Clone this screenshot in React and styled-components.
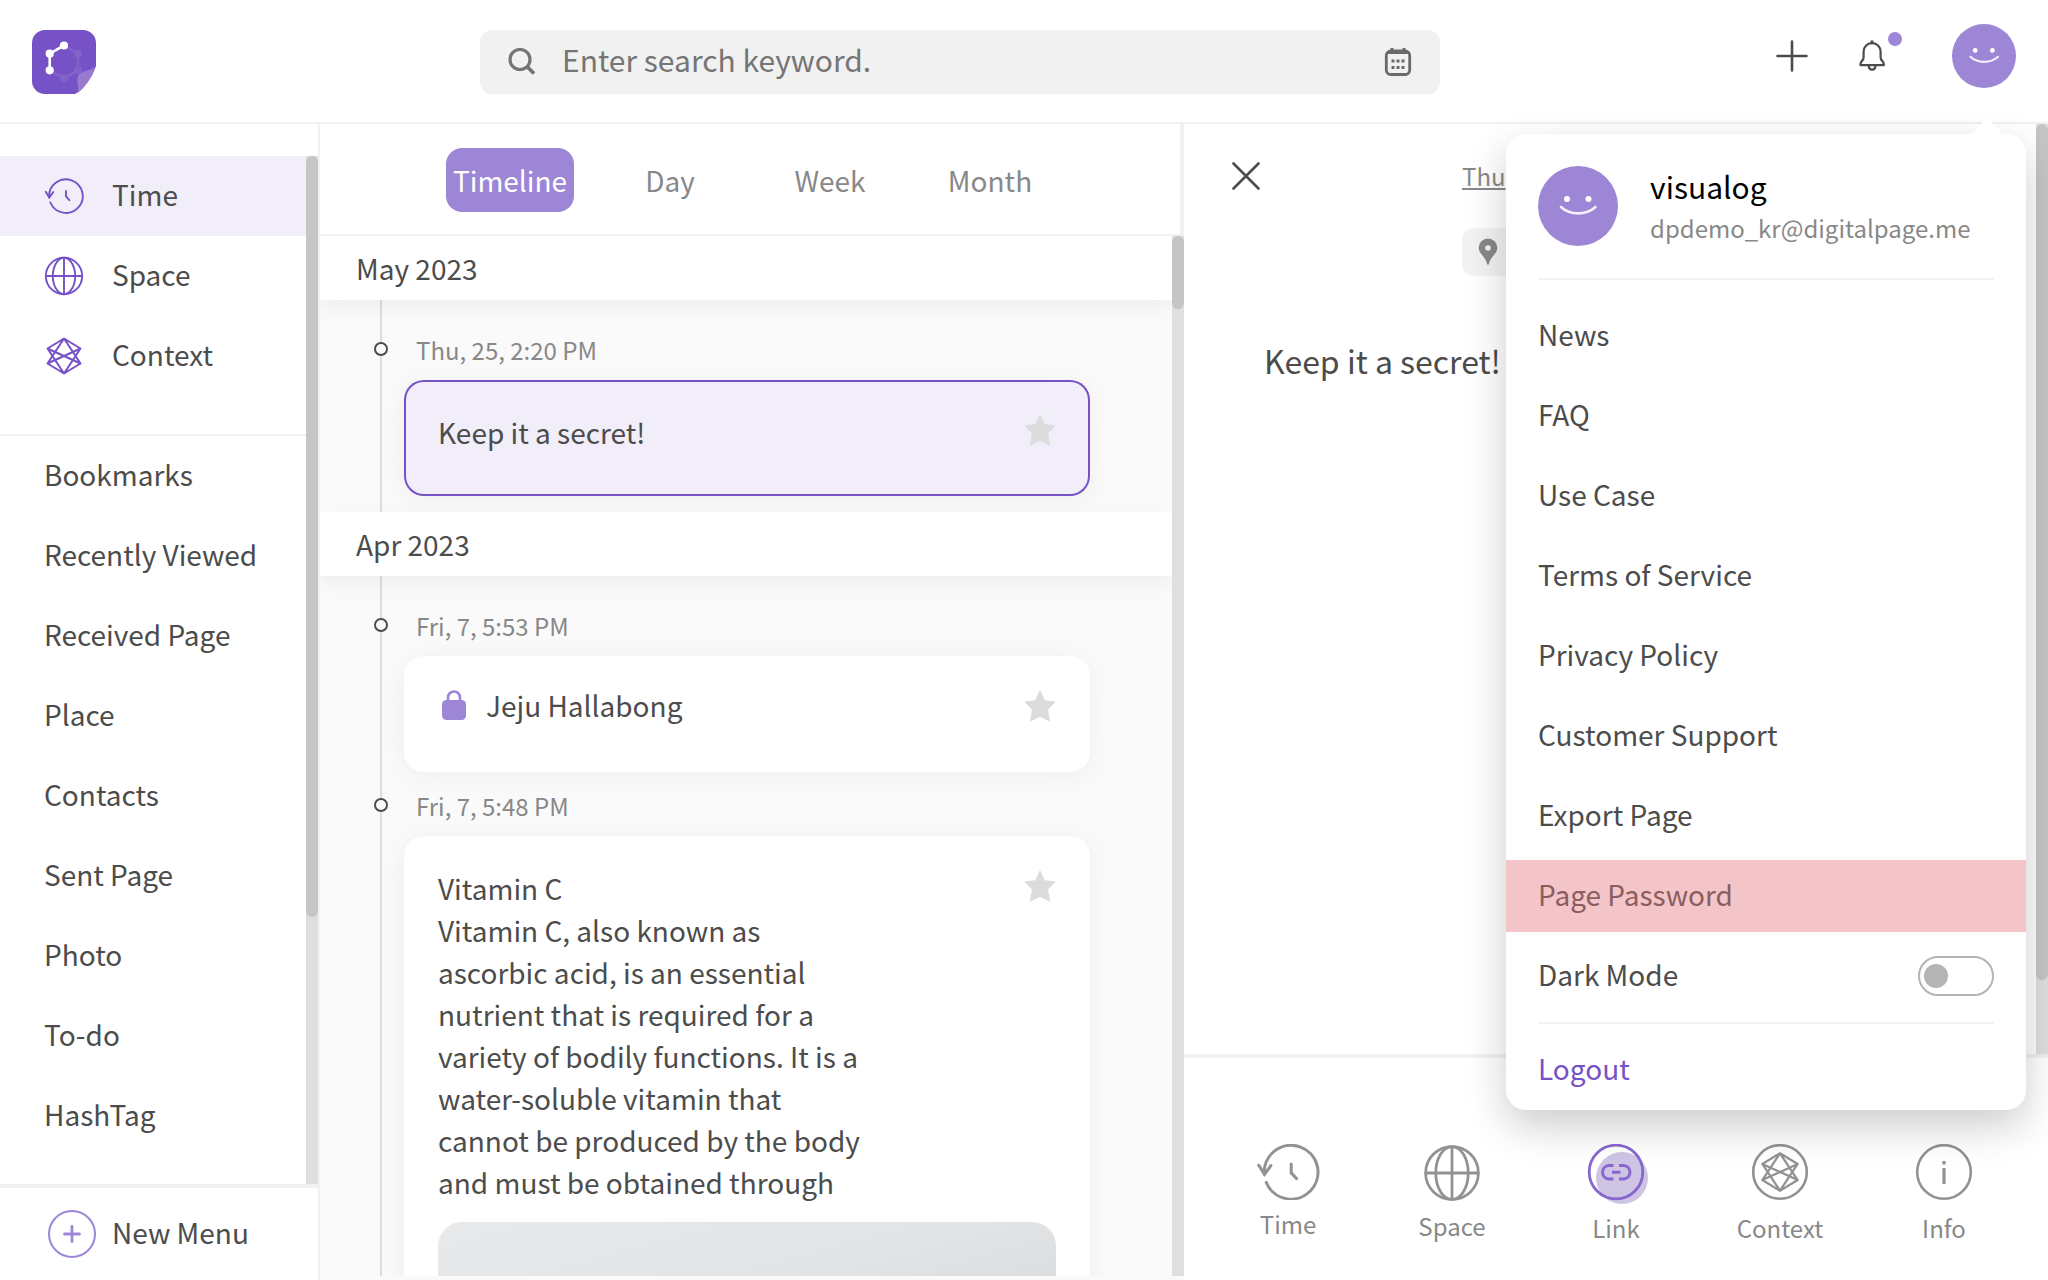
import React from "react";
import { useState } from "react";
import styled, { createGlobalStyle } from "styled-components";

const GlobalStyle = createGlobalStyle`
  *, *::before {
    box-sizing: border-box;
  }

  body {
    margin: 0;
    background: #ffffff;
    color: #4c4c4c;
    font-family: "Noto Sans CJK KR", "Noto Sans", sans-serif;
    font-size: 28px;
    font-weight: 400;
    line-height: 42px;
  }

  button, input {
    padding: 0;
    border: none;
    background: none;
    color: inherit;
    font: inherit;
  }

  button {
    cursor: pointer;
  }

  a {
    color: inherit;
    text-decoration: none;
  }

  svg {
    display: block;
    flex-shrink: 0;
  }
`;

const Page = styled.div`
  position: relative;
  display: flex;
  flex-direction: column;
  height: 100vh;
  overflow: hidden;
`;

/* header */

const Header = styled.header`
  display: grid;
  grid-template-columns: 448px minmax(0, 960px) 1fr;
  align-items: start;
  height: 124px;
  flex-shrink: 0;
  padding: 24px 32px 0;
  border-bottom: 2px solid #f1f1f1;
`;

const LogoLink = styled.a`
  width: 64px;
  margin-top: 6px;
`;

const SearchBar = styled.form`
  display: flex;
  align-items: center;
  gap: 26px;
  height: 64px;
  margin-top: 6px;
  padding: 0 28px;
  border-radius: 12px;
  background: #f1f1f1;
`;

const SearchInput = styled.input`
  flex: 1;
  min-width: 0;
  height: 48px;
  padding-bottom: 6px;
  font-size: 30px;
  outline: none;

  &::placeholder {
    color: #757575;
    opacity: 1;
  }
`;

const HeaderActions = styled.div`
  display: flex;
  justify-content: flex-end;
  align-items: center;
  height: 64px;
`;

const IconButton = styled.button`
  position: relative;
  display: flex;
  justify-content: center;
  align-items: center;
  width: ${(props) => props.$size || 32}px;
  height: ${(props) => props.$size || 32}px;
  margin-right: ${(props) => props.$gap || 0}px;
`;

const AlertDot = styled.span`
  position: absolute;
  top: -8px;
  right: -14px;
  width: 14px;
  height: 14px;
  border-radius: 50%;
  background: #9d86d6;
`;

const Body = styled.div`
  display: flex;
  flex: 1;
  min-height: 0;
`;

/* scroll area */

const ScrollArea = styled.div`
  display: flex;
  flex: 1;
  min-height: 0;
`;

const ScrollContent = styled.div`
  flex: 1;
  min-width: 0;
  overflow: hidden;
  background: ${(props) => props.$background || "#ffffff"};
`;

const ScrollTrack = styled.div`
  width: 12px;
  flex-shrink: 0;
  background: #dfdfdf;
`;

const ScrollThumb = styled.div`
  height: ${(props) => props.$ratio}%;
  border-radius: 6px;
  background: #c5c5c5;
`;

/* sidebar */

const Sidebar = styled.nav`
  display: flex;
  flex-direction: column;
  width: 320px;
  flex-shrink: 0;
  padding-top: 32px;
  border-right: 2px solid #f1f1f1;
`;

const MenuList = styled.ul`
  margin: 0;
  padding: 0 0 ${(props) => (props.$divided ? 38 : 0)}px;
  border-bottom: ${(props) => (props.$divided ? "2px solid #f1f1f1" : "none")};
  list-style: none;
`;

const MenuLink = styled.a`
  display: flex;
  align-items: center;
  gap: 28px;
  height: 80px;
  padding-left: 44px;
  background: ${(props) => (props.$active ? "#f1eef9" : "transparent")};
`;

const MenuLabel = styled.span`
  padding-bottom: 4px;
`;

const NewMenuButton = styled.button`
  display: flex;
  align-items: center;
  gap: 16px;
  height: 96px;
  flex-shrink: 0;
  padding-left: 48px;
  border-top: 4px solid #f1f1f1;
`;

/* timeline */

const TimelineColumn = styled.section`
  display: flex;
  flex-direction: column;
  width: 864px;
  flex-shrink: 0;
  padding-bottom: 4px;
  background: #fafafa;
`;

const Tabs = styled.div`
  display: flex;
  justify-content: center;
  gap: 32px;
  height: 112px;
  flex-shrink: 0;
  padding-top: 24px;
  border-right: 4px solid #f1f1f1;
  border-bottom: 2px solid #f1f1f1;
  background: #ffffff;
`;

const Tab = styled.button`
  width: 128px;
  height: 64px;
  border-radius: 16px;
  background: ${(props) => (props.$active ? "#9d86d6" : "transparent")};
  color: ${(props) => (props.$active ? "#ffffff" : "#888888")};
`;

const MonthTitle = styled.h2`
  position: relative;
  height: 64px;
  margin: 0;
  padding: 11px 36px;
  background: #ffffff;
  box-shadow: 0 8px 20px rgba(0, 0, 0, 0.05);
  font-size: 28px;
  font-weight: 400;
`;

const MonthEntries = styled.div`
  margin-left: 60px;
  padding: 16px 82px 16px 24px;
  border-left: 2px solid #dcdcdc;
`;

const EntryTime = styled.div`
  position: relative;
  height: 64px;
  padding: 13px 10px 0;
  color: #888888;
  font-size: 24px;

  &::before {
    content: "";
    position: absolute;
    top: 26px;
    left: -32px;
    width: 14px;
    height: 14px;
    border: 2px solid #4c4c4c;
    border-radius: 50%;
    background: #fafafa;
  }
`;

const Card = styled.article`
  min-height: 116px;
  margin-left: -2px;
  padding: 31px 34px;
  border-radius: 20px;
  background: ${(props) => (props.$selected ? "#f1eef9" : "#ffffff")};
  box-shadow: ${(props) => (props.$selected ? "inset 0 0 0 2px #7652c6, " : "")}0 4px 30px rgba(0, 0, 0, 0.05);
`;

const CardRow = styled.div`
  display: flex;
  justify-content: space-between;
  align-items: flex-start;
`;

const CardText = styled.p`
  display: flex;
  align-items: center;
  gap: 16px;
  max-width: 430px;
  margin: 0;
  line-height: ${(props) => (props.$locked ? 36 : 42)}px;
  white-space: pre-line;
`;

const StarButton = styled.button`
  display: flex;
  align-items: center;
  width: 32px;
  height: 38px;
`;

const CardPhoto = styled.div`
  height: 300px;
  margin-top: 19px;
  border-radius: 24px;
  background: linear-gradient(165deg, #e8e9eb 0%, #e3e4e6 30%, #d6d8da 60%);
`;

/* page detail */

const Detail = styled.main`
  display: flex;
  flex-direction: column;
  flex: 1;
  min-width: 0;
`;

const DetailTop = styled.div`
  display: grid;
  grid-template-columns: 64px 1fr 64px;
  padding: 32px 42px 0;
`;

const DetailMeta = styled.div`
  display: flex;
  flex-direction: column;
  align-items: stretch;
  gap: 32px;
  width: 296px;
  margin: 0 auto;
`;

const DetailDate = styled.a`
  color: #888888;
  font-size: 24px;
  line-height: 40px;
  text-decoration: underline;
  text-decoration-thickness: 2px;
  text-underline-offset: 2px;
`;

const PlaceChip = styled.button`
  display: flex;
  align-items: center;
  height: 48px;
  padding-left: 16px;
  border-radius: 12px;
  background: #f2f2f2;
`;

const DetailText = styled.p`
  margin: 60px 80px 0;
  font-size: 32px;
  line-height: 48px;
`;

const DetailTools = styled.div`
  display: flex;
  height: 226px;
  flex-shrink: 0;
  padding: 86px 22px 0;
  border-top: 4px solid #f1f1f1;
`;

const ToolButton = styled.button`
  display: flex;
  flex-direction: column;
  align-items: center;
  flex: 1;
  gap: 3px;
  color: #888888;
  font-size: 24px;
`;

/* profile menu */

const ProfileMenu = styled.aside`
  position: absolute;
  top: 134px;
  right: 22px;
  width: 520px;
  padding: 32px 0 4px;
  border-radius: 20px;
  background: #ffffff;
  box-shadow: 0 16px 40px rgba(0, 0, 0, 0.2);

  &::before {
    content: "";
    position: absolute;
    top: -16px;
    right: 23px;
    border-right: 16px solid transparent;
    border-bottom: 16px solid #ffffff;
    border-left: 16px solid transparent;
  }
`;

const Profile = styled.div`
  display: flex;
  gap: 32px;
  height: 112px;
  padding: 0 32px;
`;

const ProfileName = styled.div`
  color: #000000;
  font-size: 30px;
  line-height: 40px;
`;

const ProfileEmail = styled.div`
  color: #888888;
  font-size: 24px;
  line-height: 44px;
`;

const MenuDivider = styled.hr`
  margin: 0 32px ${(props) => props.$space}px;
  border: none;
  border-top: 2px solid #f4f4f4;
`;

const ProfileLinks = styled.ul`
  display: flex;
  flex-direction: column;
  gap: 8px;
  margin: 0;
  padding: 0 0 10px;
  list-style: none;
`;

const ProfileLink = styled.a`
  display: flex;
  align-items: center;
  height: 72px;
  padding: 0 32px;
  background: ${(props) => (props.$highlight ? "#f3c5c8" : "transparent")};
  color: ${(props) => (props.$highlight ? "#8c5d60" : "inherit")};
`;

const DarkModeRow = styled.label`
  display: flex;
  justify-content: space-between;
  align-items: center;
  height: 72px;
  padding: 0 32px;
`;

const Switch = styled.input`
  display: flex;
  align-items: center;
  width: 76px;
  height: 40px;
  margin: 0;
  padding: 0 4px;
  border: 2px solid #b4b4b4;
  border-radius: 20px;
  appearance: none;

  &::before {
    content: "";
    width: 24px;
    height: 24px;
    border-radius: 50%;
    background: #b4b4b4;
  }

  &:checked {
    justify-content: flex-end;
  }
`;

const LogoutButton = styled.button`
  display: block;
  width: 100%;
  height: 72px;
  padding: 0 32px 4px;
  color: #7652c6;
  text-align: left;
`;

/* icons */

const Logo = () => (
  <svg width="64" height="64" viewBox="0 0 64 64">
    <path d="M13 0H51A13 13 0 0 1 64 13V36C60 47 53 58 43 64H13A13 13 0 0 1 0 51V13A13 13 0 0 1 13 0Z" fill="#7652c6" />
    <g stroke="#8163c9" fill="#8163c9" strokeWidth="2.4">
      <path d="M32 15.5L46 23.7V40.3L32 48.5L17.7 40.3" fill="none" />
      <circle cx="46" cy="23.7" r="2.8" />
      <circle cx="46" cy="40.3" r="2.8" />
      <circle cx="32" cy="48.5" r="2.8" />
    </g>
    <path d="M64 36C60 47 53 58 45 63.5C48 58 44.500 53 45.500 48C47 40 58 42 64 36Z" fill="#9a79d0" />
    <g stroke="#ffffff" fill="#ffffff" strokeWidth="2.6">
      <path d="M32 15.500L17.700 23.700V40.300" fill="none" />
      <circle cx="32" cy="15.5" r="2.8" />
      <circle cx="17.7" cy="23.7" r="2.8" />
      <circle cx="17.7" cy="40.3" r="2.8" />
    </g>
  </svg>
);

const Smile = ({ size }) => (
  <svg width={size} height={size} viewBox="0 0 80 80">
    <circle cx="40" cy="40" r="40" fill="#9d86d6" />
    <circle cx="29" cy="33" r="3" fill="#ffffff" />
    <circle cx="50.5" cy="33" r="3" fill="#ffffff" />
    <path d="M23 41C32 49.500 48 49.500 57.500 41" fill="none" stroke="#f3effb" strokeWidth="2.6" strokeLinecap="round" />
  </svg>
);

const SearchIcon = () => (
  <svg width="28" height="28" viewBox="0 0 28 28" fill="none" stroke="#747474" strokeWidth="3.2">
    <circle cx="12" cy="11.500" r="10" />
    <path d="M19 18.500L26 25.500" strokeWidth="3.8" />
  </svg>
);

const CalendarIcon = () => (
  <svg width="28" height="30" viewBox="0 0 28 30" fill="none" stroke="#6a6a6a" strokeWidth="2.8">
    <rect x="2.300" y="4" width="23.400" height="23.500" rx="4.500" />
    <path d="M3 5.500H25" strokeWidth="3" />
    <path d="M8 1V7M20 1V7" strokeWidth="3" />
    <path d="M7.500 14H10.500M12.500 14H15.500M17.500 14H20.500M7.500 20.500H10.500M12.500 20.500H15.500M17.500 20.500H20.500" strokeWidth="3" />
  </svg>
);

const PlusIcon = () => (
  <svg width="32" height="32" viewBox="0 0 32 32" stroke="#4c4c4c" strokeWidth="2.6" strokeLinecap="round">
    <path d="M16 1.500V30.500M1.500 16H30.500" />
  </svg>
);

const BellIcon = () => (
  <svg width="32" height="32" viewBox="0 0 32 32" fill="none" stroke="#4c4c4c" strokeWidth="2.2" strokeLinejoin="round">
    <path d="M16 3.200C11 3.200 7.600 7 7.600 11.600V17.500C7.600 20.500 4.500 21.500 4.500 24V25.200H27.800V24C27.800 21.500 24.600 20.500 24.600 17.500V11.600C24.600 7 21.200 3.200 16 3.200Z" />
    <path d="M16 0.500V3" strokeWidth="3" />
    <path d="M12.800 25.500C12.800 31 19.400 31 19.400 25.500" />
  </svg>
);

const CloseIcon = () => (
  <svg width="28" height="28" viewBox="0 0 28 28" stroke="#4c4c4c" strokeWidth="2.6" strokeLinecap="round">
    <path d="M1.500 1.500L26.500 26.500M26.500 1.500L1.500 26.500" />
  </svg>
);

const CirclePlusIcon = () => (
  <svg width="48" height="48" viewBox="0 0 48 48" fill="none" stroke="#9d86d6" strokeLinecap="round">
    <circle cx="24" cy="24" r="23" strokeWidth="2" />
    <path d="M24 16.500V31.500M16.500 24H31.500" strokeWidth="2.8" />
  </svg>
);

const StarIcon = () => (
  <svg width="32" height="32" viewBox="0 0 32 32">
    <path d="M16 1L20.500 10.700L31 12L23.500 19.500L25.500 31L16 26.300L6.500 31L8.500 19.500L1 12L11.500 10.700Z" fill="#dcdcdc" stroke="#dcdcdc" strokeLinejoin="round" />
  </svg>
);

const LockIcon = () => (
  <svg width="32" height="32" viewBox="0 0 32 32">
    <rect x="4" y="11" width="24" height="20" rx="4.500" fill="#9d86d6" />
    <path d="M10 13V8.500A6 6 0 0 1 22 8.500V13" fill="none" stroke="#9d86d6" strokeWidth="2.6" />
  </svg>
);

const PinIcon = () => (
  <svg width="20" height="28" viewBox="0 0 20 28">
    <path d="M10 0.500A9.300 9.300 0 0 0 0.700 10C0.700 16 7.500 18 9.200 26.500H10.800C12.500 18 19.300 16 19.300 10A9.300 9.300 0 0 0 10 0.500Z" fill="#888888" />
    <circle cx="10" cy="10" r="2.800" fill="#f2f2f2" />
  </svg>
);

const TimeIcon = ({ width = 40, height = 40, color = "#7652c6" }) => (
  <svg width={width} height={height} viewBox={width === 40 ? "0 0 40 40" : "0 2.5 40 35"} fill="none" stroke={color} strokeWidth="1.9" strokeLinecap="round">
    <path d="M5.200 21.500A16.800 16.800 0 1 1 6.400 26.500" />
    <path d="M1.700 15.800L5.300 21.500L9.300 16" />
    <path d="M22 15V20.500L25.400 24.200" />
  </svg>
);

const SpaceIcon = ({ width = 40, height = 40, color = "#7652c6" }) => (
  <svg width={width} height={height} viewBox="0 0 40 40" fill="none" stroke={color} strokeWidth="1.9">
    <circle cx="20" cy="20" r="18.200" />
    <ellipse cx="20" cy="20" rx="11.200" ry="18.200" />
    <path d="M20 2V38M2 20H38" />
  </svg>
);

const contextLines = "M20 2.500L3.500 12.500L36.500 27.500L20 2.500L36.500 12.500L3.500 27.500L20 37.500L36.500 27.500M20 2.500L3.500 27.500M3.500 12.500L20 37.500L36.500 12.500";

const ContextIcon = () => (
  <svg width="40" height="40" viewBox="0 0 40 40" fill="none" stroke="#7652c6" strokeWidth="2" strokeLinejoin="round">
    <path d={contextLines} />
  </svg>
);

const ContextToolIcon = () => (
  <svg width="60" height="60" viewBox="0 0 60 60" fill="none" stroke="#929292" strokeLinejoin="round">
    <circle cx="30" cy="28" r="26.800" strokeWidth="2.600" />
    <g transform="translate(8.600 6.600) scale(1.070)">
      <path d={contextLines} strokeWidth="2.100" />
    </g>
  </svg>
);

const LinkToolIcon = () => (
  <svg width="64" height="60" viewBox="0 0 64 60" fill="none" stroke="#8766d0">
    <circle cx="38" cy="34" r="26" fill="#cdc5e3" stroke="none" />
    <circle cx="32" cy="28" r="26.800" strokeWidth="2.800" />
    <path d="M29.500 21.500H24.500A6.800 6.800 0 0 0 24.500 35H29.500M35 21.500H40A6.800 6.800 0 0 1 40 35H35M28 28.200H36.500" strokeWidth="3" />
  </svg>
);

const InfoToolIcon = () => (
  <svg width="60" height="60" viewBox="0 0 60 60" fill="none" stroke="#929292">
    <circle cx="30" cy="28" r="26.800" strokeWidth="2.600" />
    <path d="M30 17V20.500M30 24V40" strokeWidth="3.200" />
  </svg>
);

const viewItems = [
  { name: "Time", icon: <TimeIcon /> },
  { name: "Space", icon: <SpaceIcon /> },
  { name: "Context", icon: <ContextIcon /> },
];

const menuItems = [
  "Bookmarks",
  "Recently Viewed",
  "Received Page",
  "Place",
  "Contacts",
  "Sent Page",
  "Photo",
  "To-do",
  "HashTag",
];

const tabs = ["Timeline", "Day", "Week", "Month"];

const months = [
  {
    title: "May 2023",
    entries: [{ time: "Thu, 25, 2:20 PM", text: "Keep it a secret!", selected: true }],
  },
  {
    title: "Apr 2023",
    entries: [
      { time: "Fri, 7, 5:53 PM", text: "Jeju Hallabong", locked: true },
      {
        time: "Fri, 7, 5:48 PM",
        text: "Vitamin C\nVitamin C, also known as ascorbic acid, is an essential nutrient that is required for a variety of bodily functions. It is a water-soluble vitamin that cannot be produced by the body and must be obtained through",
        photo: true,
      },
    ],
  },
];

const tools = [
  { name: "Time", icon: <TimeIcon width={64} height={56} color="#929292" /> },
  { name: "Space", icon: <SpaceIcon width={58} height={58} color="#929292" /> },
  { name: "Link", icon: <LinkToolIcon /> },
  { name: "Context", icon: <ContextToolIcon /> },
  { name: "Info", icon: <InfoToolIcon /> },
];

const profileItems = [
  "News",
  "FAQ",
  "Use Case",
  "Terms of Service",
  "Privacy Policy",
  "Customer Support",
  "Export Page",
  "Page Password",
];

const Scroll = ({ ratio, background, children }) => (
  <ScrollArea>
    <ScrollContent $background={background}>{children}</ScrollContent>
    <ScrollTrack>
      <ScrollThumb $ratio={ratio} />
    </ScrollTrack>
  </ScrollArea>
);

const Entry = ({ entry }) => (
  <>
    <EntryTime>{entry.time}</EntryTime>
    <Card $selected={entry.selected}>
      <CardRow>
        <CardText $locked={entry.locked}>
          {entry.locked && <LockIcon />}
          {entry.text}
        </CardText>
        <StarButton aria-label="Bookmark">
          <StarIcon />
        </StarButton>
      </CardRow>
      {entry.photo && <CardPhoto />}
    </Card>
  </>
);

const App = () => {
  const [activeTab, setActiveTab] = useState("Timeline");
  const [darkMode, setDarkMode] = useState(false);

  return (
    <Page>
      <GlobalStyle />
      <Header>
        <LogoLink href="#" aria-label="Home">
          <Logo />
        </LogoLink>
        <SearchBar onSubmit={(e) => e.preventDefault()}>
          <SearchIcon />
          <SearchInput type="text" aria-label="Search" placeholder="Enter search keyword." />
          <IconButton type="button" $size={28} aria-label="Pick a date">
            <CalendarIcon />
          </IconButton>
        </SearchBar>
        <HeaderActions>
          <IconButton $gap={48} aria-label="New page">
            <PlusIcon />
          </IconButton>
          <IconButton $gap={64} aria-label="Notifications">
            <BellIcon />
            <AlertDot />
          </IconButton>
          <IconButton $size={64} aria-label="Profile">
            <Smile size={64} />
          </IconButton>
        </HeaderActions>
      </Header>

      <Body>
        <Sidebar>
          <Scroll ratio={74}>
            <MenuList $divided>
              {viewItems.map((item) => (
                <li key={item.name}>
                  <MenuLink href="#" $active={item.name === "Time"}>
                    {item.icon}
                    <MenuLabel>{item.name}</MenuLabel>
                  </MenuLink>
                </li>
              ))}
            </MenuList>
            <MenuList>
              {menuItems.map((name) => (
                <li key={name}>
                  <MenuLink href="#">
                    <MenuLabel>{name}</MenuLabel>
                  </MenuLink>
                </li>
              ))}
            </MenuList>
          </Scroll>
          <NewMenuButton>
            <CirclePlusIcon />
            <MenuLabel>New Menu</MenuLabel>
          </NewMenuButton>
        </Sidebar>

        <TimelineColumn>
          <Tabs>
            {tabs.map((name) => (
              <Tab key={name} $active={name === activeTab} onClick={() => setActiveTab(name)}>
                {name}
              </Tab>
            ))}
          </Tabs>
          <Scroll ratio={7} background="#fafafa">
            {months.map((month) => (
              <section key={month.title}>
                <MonthTitle>{month.title}</MonthTitle>
                <MonthEntries>
                  {month.entries.map((entry) => (
                    <Entry key={entry.time} entry={entry} />
                  ))}
                </MonthEntries>
              </section>
            ))}
          </Scroll>
        </TimelineColumn>

        <Detail>
          <Scroll ratio={92}>
            <DetailTop>
              <IconButton $size={40} aria-label="Close">
                <CloseIcon />
              </IconButton>
              <DetailMeta>
                <DetailDate href="#">Thu</DetailDate>
                <PlaceChip aria-label="Place">
                  <PinIcon />
                </PlaceChip>
              </DetailMeta>
            </DetailTop>
            <DetailText>Keep it a secret!</DetailText>
          </Scroll>
          <DetailTools>
            {tools.map((tool) => (
              <ToolButton key={tool.name}>
                {tool.icon}
                {tool.name}
              </ToolButton>
            ))}
          </DetailTools>
        </Detail>
      </Body>

      <ProfileMenu>
        <Profile>
          <Smile size={80} />
          <div>
            <ProfileName>visualog</ProfileName>
            <ProfileEmail>dpdemo_kr@digitalpage.me</ProfileEmail>
          </div>
        </Profile>
        <MenuDivider $space={20} />
        <ProfileLinks>
          {profileItems.map((name) => (
            <li key={name}>
              <ProfileLink href="#" $highlight={name === "Page Password"}>
                <MenuLabel>{name}</MenuLabel>
              </ProfileLink>
            </li>
          ))}
          <li>
            <DarkModeRow>
              <MenuLabel>Dark Mode</MenuLabel>
              <Switch type="checkbox" checked={darkMode} onChange={(e) => setDarkMode(e.target.checked)} />
            </DarkModeRow>
          </li>
        </ProfileLinks>
        <MenuDivider $space={10} />
        <LogoutButton>Logout</LogoutButton>
      </ProfileMenu>
    </Page>
  );
};

export default App;
